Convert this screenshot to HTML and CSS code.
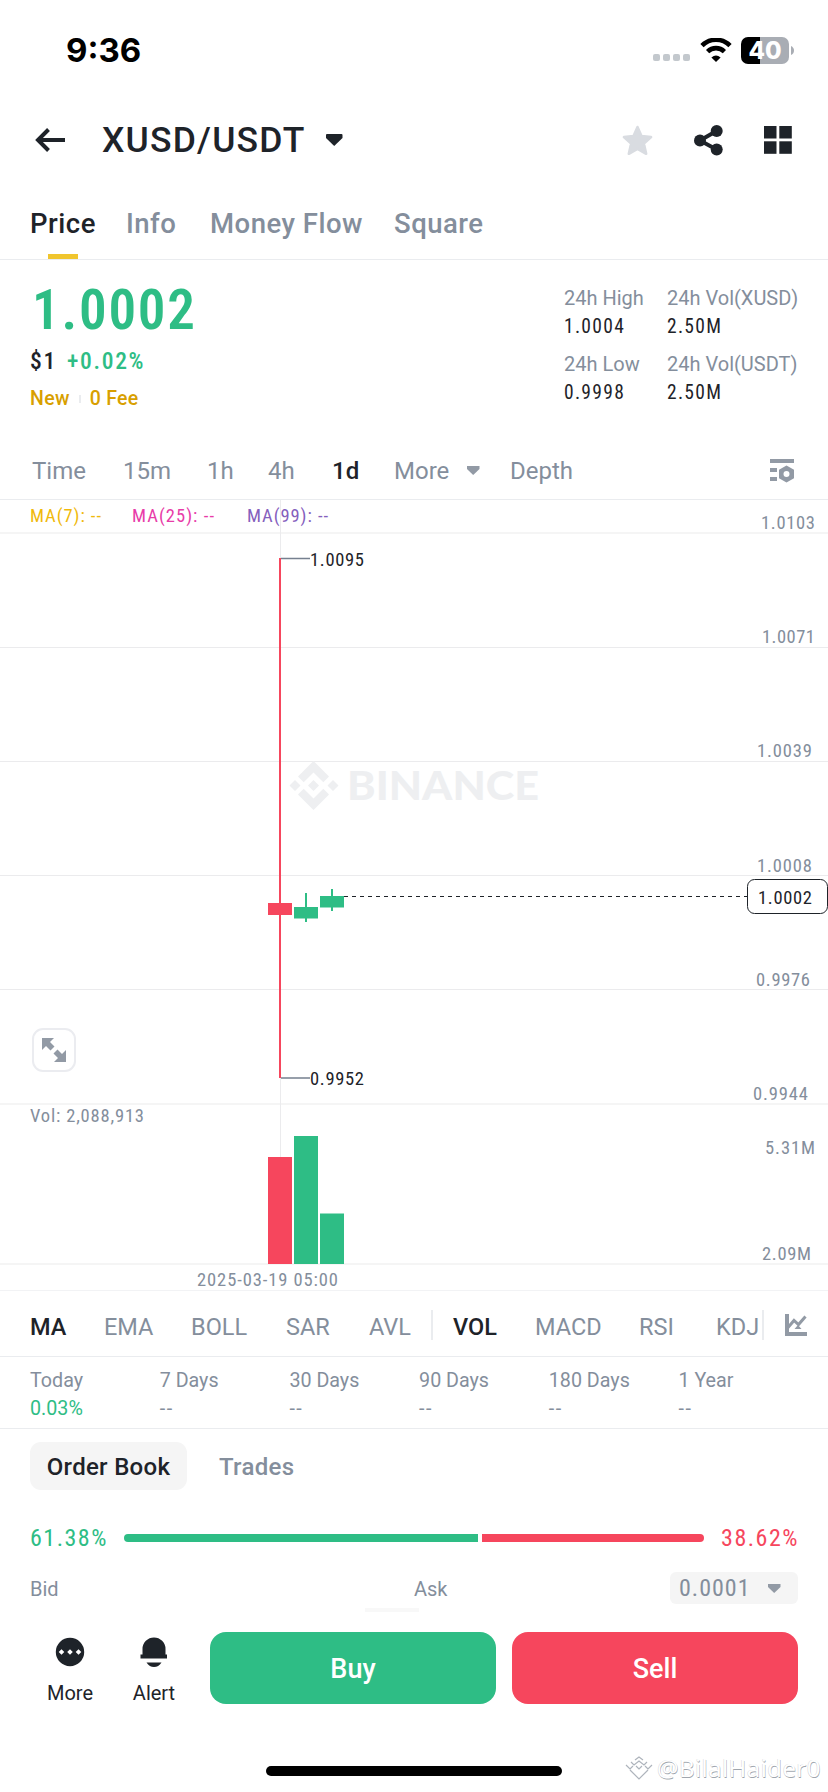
FILE: index.html
```html
<!DOCTYPE html>
<html lang="en">
<head>
    <meta charset="UTF-8">
    <meta name="viewport" content="width=device-width, initial-scale=1.0">
    <title>XUSD/USDT</title>
    <link rel="stylesheet" href="styles.css">
</head>
<body>
    <div class="status-bar">
        <span class="clock">9:36</span>
        <div class="status-icons">
            <svg class="signal" width="38" height="8" viewBox="0 0 38 8" fill="#c3c8cd">
                <rect width="7" height="7" rx="2"/>
                <rect x="10" width="7" height="7" rx="2"/>
                <rect x="20" width="7" height="7" rx="2"/>
                <rect x="30" width="7" height="7" rx="2"/>
            </svg>
            <svg class="wifi" width="32" height="24" viewBox="0 0 32 24">
                <path d="M2 7.6a19.8 19.8 0 0 1 28 0M7.6 13.6a12 12 0 0 1 16.8 0" fill="none" stroke="#000" stroke-width="4.6"/>
                <path d="M16 24l-4.6-4.6q4.6-3.6 9.200 0z" fill="#000"/>
            </svg>
            <div class="battery">
                <svg width="54" height="27" viewBox="0 0 54 27">
                    <path d="M7 0h12v27H7a7 7 0 0 1-7-7V7a7 7 0 0 1 7-7z" fill="#000"/>
                    <path d="M19 0h22a7 7 0 0 1 7 7v13a7 7 0 0 1-7 7H19z" fill="#a9adb4"/>
                    <path d="M50 9q3 1.500 3 4.500t-3 4.500z" fill="#a9adb4"/>
                </svg>
                <span>40</span>
            </div>
        </div>
    </div>

    <div class="header">
        <svg class="back" width="31" height="24" viewBox="0 0 31 24" fill="none" stroke="#1e2329" stroke-width="4">
            <path d="M30 12H4M13.500 1.500L3 12l10.500 10.500"/>
        </svg>
        <h1>XUSD/USDT</h1>
        <svg class="pair-arrow" width="17" height="12" viewBox="0 0 17 12" fill="#1e2329">
            <path d="M0 1q0-1 1-1h14.500q1 0 1 1v3L8.200 12 0 4z"/>
        </svg>
        <div class="header-icons">
            <svg width="31" height="31" viewBox="0 0 31 31" fill="#d9dce1" stroke="#d9dce1" stroke-width="2.500" stroke-linejoin="round">
                <path d="M15.500 2l4 9 9.600 1-7.200 6.500 2.300 10.300-8.700-5-8.700 5 2.300-10.300L1.900 12l9.600-1z"/>
            </svg>
            <svg width="29" height="31" viewBox="0 0 29 31" fill="#1e2329">
                <path d="M22.500 6L6 15.500l16.500 9" fill="none" stroke="#1e2329" stroke-width="4"/>
                <circle cx="22.700" cy="6" r="6"/>
                <circle cx="6" cy="15.500" r="6"/>
                <circle cx="22.700" cy="24.500" r="6"/>
            </svg>
            <svg width="28" height="28" viewBox="0 0 28 28" fill="#1e2329">
                <rect width="12.500" height="12.500"/>
                <rect x="15.300" width="12.500" height="12.500"/>
                <rect y="15.300" width="12.500" height="12.500"/>
                <rect x="15.300" y="15.300" width="12.500" height="12.500"/>
            </svg>
        </div>
    </div>

    <div class="tabs">
        <span class="tab active">Price</span>
        <span class="tab">Info</span>
        <span class="tab">Money Flow</span>
        <span class="tab">Square</span>
    </div>

    <div class="summary">
        <div class="price-box">
            <div class="price">1.0002</div>
            <div class="change"><span class="usd">$1</span><span class="up">+0.02%</span></div>
            <div class="tags"><span>New</span><i></i><span>0 Fee</span></div>
        </div>
        <div class="stats">
            <div><label>24h High</label><b>1.0004</b></div>
            <div><label>24h Vol(XUSD)</label><b>2.50M</b></div>
            <div><label>24h Low</label><b>0.9998</b></div>
            <div><label>24h Vol(USDT)</label><b>2.50M</b></div>
        </div>
    </div>

    <div class="intervals">
        <span>Time</span>
        <span>15m</span>
        <span>1h</span>
        <span>4h</span>
        <span class="active">1d</span>
        <span>More</span>
        <svg width="13" height="9" viewBox="0 0 13 9" fill="#929aa5"><path d="M0 0h12.500v3L6.200 9 0 3z"/></svg>
        <span>Depth</span>
        <svg width="25" height="24" viewBox="0 0 25 24" fill="#929aa5">
            <path d="M0 0h24v4H0zM0 9h7v4H0zM0 18h7v4H0z"/>
            <path fill-rule="evenodd" d="M16.500 6.500L24 10.800v8.400l-7.500 4.300L9 19.200v-8.400zM16.500 12a3 3 0 1 0 0 6 3 3 0 0 0 0-6z"/>
        </svg>
    </div>

    <svg class="chart" width="828" height="790" viewBox="0 0 828 790">
        <!-- grid -->
        <g class="edge">
            <path d="M0 33h828M0 604h828M0 764h828"/>
        </g>
        <g class="grid">
            <path d="M0 147.500h828M0 261.500h828M0 375.500h828M0 489.500h828M280.500 0v657"/>
        </g>

        <!-- logo in the middle of the chart -->
        <g fill="#eeeff1">
            <path d="M313.500 261l15.500 15.500-5.700 5.700-9.800-9.800-9.800 9.800-5.700-5.700zM313.500 310l15.500-15.500-5.700-5.700-9.800 9.800-9.800-9.800-5.700 5.700zM313.500 280l5.500 5.500-5.500 5.500-5.500-5.500zM295 280l5.500 5.500L295 291l-5.500-5.500zM333 280l5.500 5.500L333 291l-5.500-5.500z"/>
            <text class="brand" x="347" y="299.500" textLength="192" lengthAdjust="spacingAndGlyphs">BINANCE</text>
        </g>

        <g class="ma">
            <text x="30" y="22" textLength="71" fill="#f0b90b">MA(7): --</text>
            <text x="132" y="22" textLength="82" fill="#e83ba8">MA(25): --</text>
            <text x="247" y="22" textLength="81" fill="#8560bd">MA(99): --</text>
        </g>

        <!-- candles -->
        <g class="down">
            <rect x="279" y="58" width="2" height="520"/>
            <rect x="268" y="403" width="24" height="12"/>
        </g>
        <g class="up">
            <rect x="305" y="393" width="2" height="29"/>
            <rect x="294" y="407" width="24" height="11.500"/>
            <rect x="331" y="389" width="2" height="22"/>
            <rect x="320" y="396" width="24" height="11.500"/>
        </g>
        <path d="M281 58.500h29M281 578h29" stroke="#76808f" stroke-width="1.500"/>
        <path d="M344 396.500h403" stroke="#1e2329" stroke-dasharray="4 4"/>

        <!-- volume -->
        <rect class="down" x="268" y="657" width="24" height="107"/>
        <rect class="up" x="294" y="636" width="24" height="128"/>
        <rect class="up" x="320" y="713.500" width="24" height="50.500"/>

        <g class="dark">
            <text x="310" y="66" textLength="54">1.0095</text>
            <text x="310" y="585" textLength="54">0.9952</text>
        </g>
        <g class="axis">
            <text x="761" y="29" textLength="54">1.0103</text>
            <text x="762" y="143" textLength="53">1.0071</text>
            <text x="757" y="257" textLength="55">1.0039</text>
            <text x="757" y="372" textLength="55">1.0008</text>
            <text x="756" y="486" textLength="54">0.9976</text>
            <text x="753" y="600" textLength="55">0.9944</text>
            <text x="765" y="654" textLength="50">5.31M</text>
            <text x="762" y="760" textLength="49">2.09M</text>
            <text x="30" y="622" textLength="114">Vol: 2,088,913</text>
            <text x="197" y="785.500" textLength="141">2025-03-19 05:00</text>
        </g>

        <rect x="747.500" y="379.500" width="80" height="34" rx="7" fill="#fff" stroke="#1e2329"/>
        <text class="dark" x="758" y="404" textLength="54">1.0002</text>

        <!-- full screen button -->
        <rect x="33" y="529" width="42" height="42" rx="10" fill="#fff" stroke="#ebecf0" stroke-width="2"/>
        <path d="M42 538h12l-4 4 4.500 4.500-4 4L46 546l-4 4zM66 562H54l4-4-4.500-4.500 4-4L62 554l4-4z" fill="#929aa5"/>
    </svg>

    <div class="indicators">
        <span class="active">MA</span>
        <span>EMA</span>
        <span>BOLL</span>
        <span>SAR</span>
        <span>AVL</span>
        <i></i>
        <span class="active">VOL</span>
        <span>MACD</span>
        <span>RSI</span>
        <span>KDJ</span>
        <i></i>
        <svg width="22" height="22" viewBox="0 0 22 22" fill="#929aa5">
            <path d="M0 0h4v18h18v4H0z"/>
            <path d="M3 13.500l6-7 4.500 4L20.500 2.500" fill="none" stroke="#929aa5" stroke-width="3"/>
            <path d="M13 11l3.500 4h-7z"/>
        </svg>
    </div>

    <div class="performance">
        <div><span>Today</span><span class="up">0.03%</span></div>
        <div><span>7 Days</span><span class="empty">--</span></div>
        <div><span>30 Days</span><span class="empty">--</span></div>
        <div><span>90 Days</span><span class="empty">--</span></div>
        <div><span>180 Days</span><span class="empty">--</span></div>
        <div><span>1 Year</span><span class="empty">--</span></div>
    </div>

    <div class="book-tabs">
        <span class="active">Order Book</span>
        <span>Trades</span>
    </div>

    <div class="ratio">
        <span class="up">61.38%</span>
        <div class="ratio-bar">
            <div class="bid" style="width: calc((100% - 4px) * 0.6138)"></div>
            <div class="ask"></div>
        </div>
        <span class="down">38.62%</span>
    </div>

    <div class="book-head">
        <span>Bid</span>
        <span>Ask</span>
        <div class="precision">
            0.0001
            <svg width="13" height="9" viewBox="0 0 13 9" fill="#929aa5"><path d="M0 0h12.500v3L6.200 9 0 3z"/></svg>
        </div>
    </div>
    <div class="book-peek"></div>

    <div class="actions">
        <div class="action">
            <svg width="30" height="30" viewBox="0 0 30 30">
                <circle cx="15" cy="15" r="14.200" fill="#1e2329"/>
                <path d="M6.500 12.200l2.800 2.800-2.800 2.800L3.700 15zM15 12.200l2.800 2.800-2.800 2.800-2.800-2.800zM23.500 12.200l2.800 2.800-2.800 2.800-2.800-2.800z" fill="#fff"/>
            </svg>
            More
        </div>
        <div class="action">
            <svg width="30" height="30" viewBox="0 0 30 30" fill="#1e2329">
                <path d="M3.500 12a11.500 11.500 0 0 1 23 0v5.500h1.500v4H1.500v-4h2z"/>
                <path d="M7.500 25.500h15Q19.500 30 15 30t-7.500-4.500z"/>
            </svg>
            Alert
        </div>
        <button class="buy">Buy</button>
        <button class="sell">Sell</button>
    </div>

    <div class="home-bar"></div>

    <div class="author">
        <svg width="28" height="24" viewBox="0 0 28 24" fill="none" stroke="#aeb4bc" stroke-width="1.200">
            <path d="M6 6l3 3 5-4 5 4 3-3M10 4l4-3 4 3M1 9l4 4 3-3M27 9l-4 4-3-3M11 10l3 3 3-3M5 14l9 9 9-9"/>
        </svg>
        <span>@BilalHaider0</span>
    </div>
</body>
</html>
```
FILE: styles.css
```css
* {
    box-sizing: border-box;
}
body {
    margin: 0;
    width: 828px;
    height: 1792px;
    overflow: hidden;
    position: relative;
    background: #fff;
    color: #1e2329;
    font-family: Roboto, "Noto Sans", sans-serif;
}
svg {
    display: block;
}
.up {
    color: #2ebd85;
    fill: #2ebd85;
}
.down {
    color: #f6465d;
    fill: #f6465d;
}

/* status bar */
.status-bar {
    height: 100px;
    padding: 0 33px 0 66px;
    display: flex;
    justify-content: space-between;
    align-items: center;
}
.clock {
    font: 700 33px Inter, sans-serif;
    color: #000;
}
.status-icons {
    display: flex;
    align-items: center;
    gap: 9px;
}
.signal {
    margin-top: 16px;
}
.battery {
    position: relative;
}
.battery span {
    position: absolute;
    left: 0;
    top: 0;
    width: 48px;
    text-align: center;
    font: 800 24px/27px Inter, sans-serif;
    color: #fff;
}

/* header */
.header {
    height: 80px;
    padding: 0 36px 0 35px;
    display: flex;
    align-items: center;
}
.header h1 {
    margin: 0 0 0 36px;
    width: 224px;
    font-size: 35.500px;
    font-weight: 500;
    letter-spacing: 1.200px;
    white-space: nowrap;
}
.header-icons {
    margin-left: auto;
    display: flex;
    align-items: center;
    gap: 41px;
}

/* page tabs */
.tabs {
    height: 80px;
    padding: 0 30px;
    display: grid;
    grid-template-columns: 96px 84px 184px 1fr;
    border-bottom: 1px solid #eaecef;
    font-size: 27.500px;
    font-weight: 500;
    letter-spacing: 0.500px;
    color: #848e9c;
}
.tab {
    height: 79px;
    padding-top: 28px;
    line-height: 32px;
}
.tab.active {
    color: #1e2329;
    position: relative;
}
.tab.active::after {
    content: "";
    position: absolute;
    left: 18px;
    bottom: 0;
    width: 30px;
    height: 5px;
    background: #f0c52e;
}

/* price and 24h stats */
.summary {
    height: 180px;
    padding: 23px 30px 0;
    display: flex;
    justify-content: space-between;
}
.price {
    padding-left: 2px;
    color: #2ebd85;
    font-size: 55px;
    font-weight: 600;
    font-stretch: 75%;
    line-height: 54px;
    letter-spacing: 1.800px;
}
.change {
    display: flex;
    gap: 10px;
    font-size: 23.500px;
    font-weight: 500;
    font-stretch: 75%;
    letter-spacing: 1.700px;
    line-height: 48px;
}
.tags {
    margin-top: -1px;
    display: flex;
    align-items: center;
    gap: 9px;
    font-size: 19.500px;
    font-weight: 500;
    line-height: 30px;
    letter-spacing: 0.300px;
    color: #d89f00;
}
.tags i {
    width: 2px;
    height: 8px;
    background: #eaecef;
}
.stats {
    width: 234px;
    display: grid;
    grid-template-columns: 103px 1fr;
    grid-auto-rows: 66px;
    white-space: nowrap;
}
.stats label {
    display: block;
    font-size: 20px;
    line-height: 30px;
    color: #848e9c;
}
.stats b {
    display: block;
    font-size: 19.500px;
    font-weight: 400;
    font-stretch: 75%;
    letter-spacing: 1.300px;
    line-height: 28px;
}

/* chart intervals */
.intervals {
    height: 60px;
    padding: 2px 0 0 32px;
    display: grid;
    grid-template-columns: 91px 84px 61px 64px 62px 73px 43px 260px 1fr;
    align-items: center;
    border-bottom: 1px solid #eaecef;
    font-size: 24px;
    color: #848e9c;
}
.intervals .active,
.indicators .active,
.book-tabs .active {
    color: #1e2329;
    font-weight: 500;
}

/* chart */
.chart text {
    font-size: 18.500px;
    font-stretch: 75%;
}
.chart .grid path {
    stroke: #ebebed;
}
.chart .edge path {
    stroke: #f5f5f5;
    stroke-width: 2;
}
.chart .brand {
    font: 900 39px Lato, sans-serif;
}
.chart .axis {
    fill: #848e9c;
}
.chart .dark {
    fill: #1e2329;
}

/* indicators */
.indicators {
    height: 67px;
    padding: 6px 0 0 30px;
    display: grid;
    grid-template-columns: 74px 87px 95px 83px 62px 22px 82px 104px 77px 46px 23px 1fr;
    align-items: center;
    border-top: 1px solid #f2f3f5;
    border-bottom: 1px solid #eaecef;
    font-size: 23.500px;
    color: #848e9c;
}
.indicators i {
    width: 2px;
    height: 30px;
    margin-top: -3px;
    background: #eaecef;
}
.indicators svg {
    margin-top: -4px;
}

.performance {
    height: 72px;
    padding: 10px 0 0 30px;
    display: grid;
    grid-template-columns: repeat(6, 129.700px);
    border-bottom: 1px solid #eaecef;
    font-size: 19.700px;
    line-height: 28px;
    color: #848e9c;
}
.performance span {
    display: block;
}
.performance .up {
    color: #2ebd85;
}
.performance .empty {
    letter-spacing: 1.500px;
}

/* order book */
.book-tabs {
    padding: 13px 30px 0;
    display: flex;
    gap: 16px;
    font-size: 24px;
    font-weight: 500;
    line-height: 50px;
    letter-spacing: 0.300px;
    color: #848e9c;
}
.book-tabs span {
    height: 48px;
    padding: 0 16px;
}
.book-tabs .active {
    width: 157px;
    padding: 0;
    text-align: center;
    background: #f5f5f5;
    border-radius: 11px;
}
.ratio {
    height: 32px;
    margin: 32px 30px 0;
    display: grid;
    grid-template-columns: 94px 580px 1fr;
    grid-template-rows: 32px;
    align-items: center;
    font-size: 24px;
    font-stretch: 75%;
    line-height: 35px;
    letter-spacing: 1.500px;
}
.ratio .down {
    text-align: right;
    margin-right: -1px;
}
.ratio-bar {
    height: 8px;
    display: flex;
    gap: 4px;
    border-radius: 4px;
    overflow: hidden;
}
.ratio-bar .bid {
    background: #2ebd85;
}
.ratio-bar .ask {
    flex: 1;
    background: #f6465d;
}
.book-head {
    height: 32px;
    margin: 18px 30px 0;
    display: grid;
    grid-template-columns: 384px 1fr 128px;
    grid-template-rows: 32px;
    align-items: center;
    font-size: 20px;
    color: #848e9c;
}
.book-head span {
    padding-top: 2px;
}
.precision {
    height: 32px;
    padding: 0 17px 0 9px;
    display: flex;
    align-items: center;
    justify-content: space-between;
    background: #f5f5f5;
    border-radius: 6px;
    font-size: 24px;
    font-stretch: 75%;
    line-height: 34px;
    letter-spacing: 1px;
}
.book-peek {
    width: 54px;
    height: 4px;
    margin: 4px 0 0 365px;
    background: #f8f8f8;
}

/* bottom bar */
.actions {
    height: 72px;
    margin: 20px 30px 0;
    display: grid;
    grid-template-columns: 80px 88px 1fr 1fr;
    grid-template-rows: 72px;
}
.action {
    height: 76px;
    display: flex;
    flex-direction: column;
    align-items: center;
    gap: 12px;
    padding-top: 5px;
    font-size: 20px;
    line-height: 28px;
}
.action svg {
    flex: none;
}
.actions button {
    width: 286px;
    padding: 1px 0 0;
    border: 0;
    border-radius: 16px;
    color: #fff;
    font: 500 27px Roboto, sans-serif;
}
.actions .buy {
    margin-left: 12px;
    background: #2ebd85;
}
.actions .sell {
    margin-left: 14px;
    background: #f6465d;
}
.home-bar {
    width: 296px;
    height: 10px;
    margin: 62px auto 0;
    border-radius: 5px;
    background: #000;
}
.author {
    position: absolute;
    left: 625px;
    top: 1751px;
    display: flex;
    align-items: center;
    gap: 4px;
    font: 24px "Noto Sans", sans-serif;
    letter-spacing: 0.400px;
    color: #fff;
    text-shadow: 0.500px 0.500px 0.500px #a0a6ae, -0.500px 0 0.500px #d5d8dc;
}
```
